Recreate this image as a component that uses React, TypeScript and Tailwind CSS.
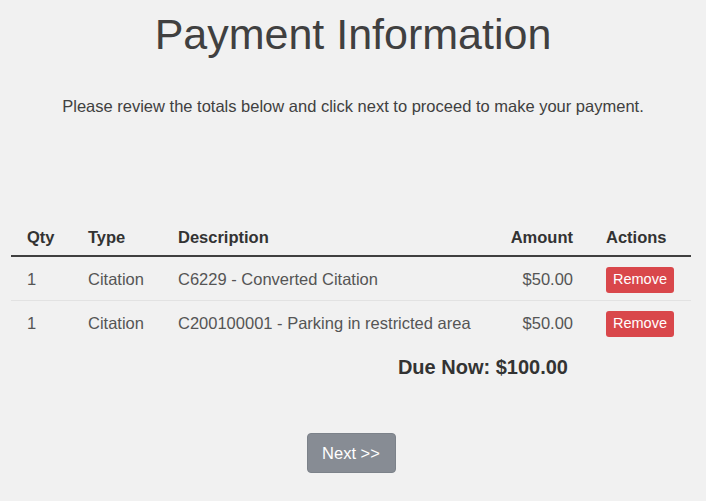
import React from "react"

type LineItem = {
  qty: number
  type: string
  description: string
  amount: string
}

const items: LineItem[] = [
  { qty: 1, type: "Citation", description: "C6229 - Converted Citation", amount: "$50.00" },
  { qty: 1, type: "Citation", description: "C200100001 - Parking in restricted area", amount: "$50.00" },
]

export default function App() {
  return (
    <div className="min-h-[501px] w-full bg-[#f1f1f1] text-[#444] font-['Liberation_Sans',Arial,sans-serif]">
      {/* Heading */}
      <div className="flex flex-col items-center pt-[6px]">
        <h1 className="text-[43px] leading-[56px] text-[#404040]">Payment Information</h1>
        <p className="mt-[34px] text-[16.5px] leading-[20px] text-[#404040]">
          Please review the totals below and click next to proceed to make your payment.
        </p>
      </div>

      {/* Cart table */}
      <div className="mt-[109px] px-[11px] w-[702px]">
        <table className="w-full table-fixed border-collapse text-[16.5px]">
          <colgroup>
            <col className="w-[63px]" />
            <col className="w-[90px]" />
            <col />
            <col className="w-[103px]" />
            <col className="w-[100px]" />
          </colgroup>
          <thead>
            <tr className="border-b-2 border-[#404040] text-[#333]">
              <th className="h-[31px] pl-[16px] text-left font-bold align-top">Qty</th>
              <th className="pl-[14px] text-left font-bold align-top">Type</th>
              <th className="pl-[14px] text-left font-bold align-top">Description</th>
              <th className="pr-[18px] text-right font-bold align-top">Amount</th>
              <th className="pl-[15px] text-left font-bold align-top">Actions</th>
            </tr>
          </thead>
          <tbody>
            {items.map((item, i) => (
              <tr key={i} className={i < items.length - 1 ? "border-b border-[#e2e2e2]" : ""}>
                <td className="h-[44px] pl-[16px] pt-[2px] text-[#555]">{item.qty}</td>
                <td className="pl-[14px] pt-[2px] text-[#555]">{item.type}</td>
                <td className="pl-[14px] pt-[2px] text-[#555] whitespace-nowrap">{item.description}</td>
                <td className="pr-[18px] pt-[2px] text-right text-[#555]">{item.amount}</td>
                <td className="pl-[15px] pt-[2px]">
                  <button
                    type="button"
                    className="h-[26px] w-[68px] rounded-[3px] bg-[#d9474b] text-[14.5px] text-white"
                  >
                    Remove
                  </button>
                </td>
              </tr>
            ))}
          </tbody>
        </table>

        {/* Total */}
        <div className="flex justify-end pr-[123px] mt-[11px]">
          <span className="text-[20px] font-bold leading-[24px] text-[#333]">Due Now: $100.00</span>
        </div>
      </div>

      {/* Next */}
      <div className="flex justify-center mt-[54px] pr-[4px]">
        <button
          type="button"
          className="h-[40px] w-[89px] rounded-[4px] border border-[#7c828a] bg-[#878c94] text-[16.5px] text-white"
        >
          Next &gt;&gt;
        </button>
      </div>
    </div>
  )
}
